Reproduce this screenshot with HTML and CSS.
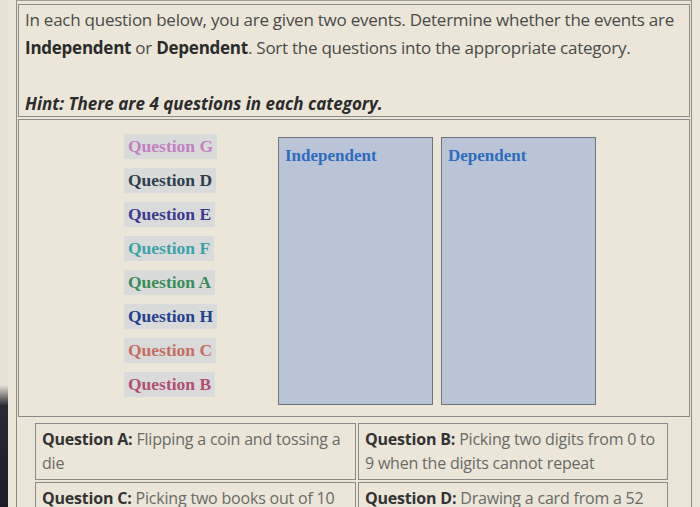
FILE: index.html
```html
<!DOCTYPE html>
<html lang="en">
<head>
  <meta charset="UTF-8">
  <title>Independent or Dependent</title>
  <link rel="stylesheet" href="styles.css">
</head>
<body>
  <div class="bezel"></div>
  <div class="page">
    <div class="intro">
      <p>In each question below, you are given two events. Determine whether the events are <b>Independent</b> or <b>Dependent</b>. Sort the questions into the appropriate category.</p>
      <p class="hint">Hint: There are 4 questions in each category.</p>
    </div>

    <div class="sort">
      <div class="pool">
        <span class="item q-g">Question G</span>
        <span class="item q-d">Question D</span>
        <span class="item q-e">Question E</span>
        <span class="item q-f">Question F</span>
        <span class="item q-a">Question A</span>
        <span class="item q-h">Question H</span>
        <span class="item q-c">Question C</span>
        <span class="item q-b">Question B</span>
      </div>
      <div class="bin"><h2>Independent</h2></div>
      <div class="bin"><h2>Dependent</h2></div>
    </div>

    <div class="questions">
      <div class="cell"><b>Question A:</b> Flipping a coin and tossing a die</div>
      <div class="cell"><b>Question B:</b> Picking two digits from 0 to 9 when the digits cannot repeat</div>
      <div class="cell"><b>Question C:</b> Picking two books out of 10</div>
      <div class="cell"><b>Question D:</b> Drawing a card from a 52 card deck, replacing it and drawing again</div>
    </div>
  </div>
</body>
</html>
```

FILE: styles.css
```css
body { margin: 0; background: #ebe6d8; display: flex; height: 507px; overflow: hidden; font-family: "Open Sans", "Noto Sans", sans-serif; color: #4a4a48; }
.bezel { flex: none; width: 8px; background: linear-gradient(to bottom, #e6e1d3 0, #e6e1d3 76%, #2a2a36 80%, #1c1c28 100%); }

.page { flex: none; width: 672px; margin-left: 8px; padding: 3px 1px 0; border-left: 1px solid #8c8a84; border-right: 1px solid #8c8a84; border-top: 1px solid #a09e98; }

.intro { border: 1px solid #8c8a84; padding: 1px 6px 1px; height: 113px; box-sizing: border-box; }
.intro p { margin: 0; font-size: 17px; line-height: 28px; letter-spacing: -0.25px; }
.intro b { color: #2b2b2b; }
.intro .hint { margin-top: 31px; line-height: 22px; font-weight: bold; font-style: italic; color: #2b2b2b; letter-spacing: 0; }

.sort { display: flex; align-items: flex-start; margin-top: 2px; height: 298px; box-sizing: border-box; border: 1px solid #8c8a84; }
.pool { flex: none; display: flex; flex-direction: column; align-items: flex-start; gap: 9px; width: 98px; margin: 14px 56px 0 105px; }
.item { white-space: nowrap; padding: 2px 4px; background: #d9dbda; font-family: "Liberation Serif", serif; font-weight: bold; font-size: 17.5px; line-height: 21px; }
.q-g { color: #c27fc2; }
.q-d { color: #2f3e4c; }
.q-e { color: #3d3a90; }
.q-f { color: #3aa3aa; }
.q-a { color: #3a8c58; }
.q-h { color: #23408c; }
.q-c { color: #c46f5e; }
.q-b { color: #b24e72; }

.bin { flex: none; width: 155px; height: 268px; margin: 17px 8px 0 0; box-sizing: border-box; border: 1px solid #6e747c; background: #b9c4d6; }
.bin h2 { margin: 0; padding: 7px 6px 0; font-family: "Liberation Serif", serif; font-size: 17px; line-height: 22px; color: #2e6cc0; }

.questions { display: grid; grid-template-columns: 321px 310px; gap: 2px; margin: 6px 0 0 17px; }
.cell { border: 1px solid #8c8a84; padding: 3px 6px 4px; font-size: 16px; line-height: 24px; letter-spacing: -0.2px; color: #6a6a66; }
.cell b { color: #333; }
```
